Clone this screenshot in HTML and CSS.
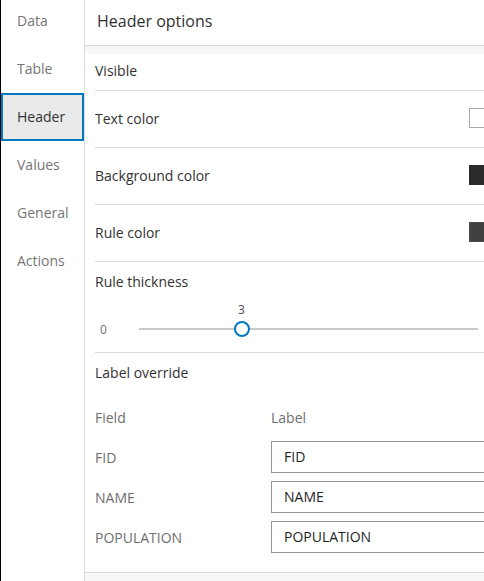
FILE: index.html
```html
<!DOCTYPE html>
<html>
<head>
<meta charset="utf-8">
<link rel="stylesheet" href="styles.css">
</head>
<body>
<div class="app">
  <nav class="side">
    <div class="tab">Data</div>
    <div class="tab">Table</div>
    <div class="tab active">Header</div>
    <div class="tab">Values</div>
    <div class="tab">General</div>
    <div class="tab">Actions</div>
  </nav>
  <main class="panel">
    <div class="title">Header options</div>
    <div class="band"></div>
    <div class="rows">
      <div class="row short"><span>Visible</span></div>
      <div class="row"><span>Text color</span><span class="swatch white"></span></div>
      <div class="row"><span>Background color</span><span class="swatch bg"></span></div>
      <div class="row"><span>Rule color</span><span class="swatch rule"></span></div>
      <div class="row slider-row">
        <div class="lbl">Rule thickness</div>
        <div class="slider">
          <span class="min">0</span>
          <div class="track">
            <span class="val">3</span>
            <span class="thumb"></span>
          </div>
        </div>
      </div>
      <div class="override">
        <div class="lbl">Label override</div>
        <div class="grid">
          <div class="gh">Field</div><div class="gh">Label</div>
          <div class="fname">FID</div><div class="inp">FID</div>
          <div class="fname">NAME</div><div class="inp">NAME</div>
          <div class="fname">POPULATION</div><div class="inp">POPULATION</div>
        </div>
      </div>
    </div>
    <div class="foot"></div>
  </main>
</div>
</body>
</html>
```
FILE: styles.css
```css
html, body { margin: 0; padding: 0; background: #fff; }
body { font-family: "Open Sans", "Liberation Sans", sans-serif; color: #323232; font-size: 14px; }
.app { display: flex; width: 484px; height: 581px; overflow: hidden; border-left: 1px solid #000; box-sizing: border-box; }
.side { width: 83px; flex: none; border-right: 1px solid #dcdcdc; display: flex; flex-direction: column; margin-top: -3px; }
.tab { height: 48px; line-height: 48px; padding-left: 16px; color: #757575; font-size: 14px; box-sizing: border-box; }
.tab.active { background: #eaeaea; border: 2px solid #0079c1; padding-left: 14px; color: #323232; line-height: 44px; }
.panel { flex: 1; min-width: 0; display: flex; flex-direction: column; }
.title { height: 45px; line-height: 42px; padding-left: 12px; font-size: 16px; border-bottom: 1px solid #dcdcdc; flex: none; }
.band { height: 8px; background: #f7f7f7; flex: none; }
.rows { padding-left: 10px; flex: 1; display: flex; flex-direction: column; }
.row { height: 57px; border-bottom: 1px solid #dcdcdc; display: flex; align-items: center; justify-content: space-between; box-sizing: border-box; padding-bottom: 2px; }
.row.short { height: 37px; padding-bottom: 4px; }
.swatch { width: 20px; height: 20px; box-sizing: border-box; flex: none; margin-right: -5px; }
.swatch.white { background: #fff; border: 1px solid #a8a8a8; }
.swatch.bg { background: #2b2b2b; border: 1px solid #2b2b2b; }
.swatch.rule { background: #404040; border: 1px solid #4a4a4a; }
.slider-row { height: 91px; flex-direction: column; align-items: stretch; justify-content: flex-start; padding-top: 12px; padding-bottom: 0; }
.lbl { font-size: 14px; line-height: 16px; }
.slider { display: flex; align-items: center; margin-top: 28px; }
.min { width: 44px; padding-left: 5px; box-sizing: border-box; font-size: 12px; line-height: 18px; padding-top: 3px; color: #6e6e6e; flex: none; }
.track { position: relative; flex: 1; height: 2px; background: #c8c8c8; margin-right: 6px; }
.thumb { position: absolute; left: 95px; top: -7px; width: 16px; height: 16px; box-sizing: border-box; border: 2px solid #0079c1; border-radius: 50%; background: #fff; }
.val { position: absolute; left: 99px; top: -26px; font-size: 12px; line-height: 16px; color: #4a4a4a; }
.override { padding-top: 12px; }
.grid { display: grid; grid-template-columns: 176px 1fr; grid-auto-rows: 32px; row-gap: 8px; margin-top: 20px; align-items: center; }
.gh { color: #6e6e6e; font-size: 14px; }
.fname { color: #6e6e6e; font-size: 14px; }
.inp { height: 32px; border: 1px solid #959595; box-sizing: border-box; line-height: 30px; padding-left: 12px; margin-right: -20px; font-size: 14px; color: #1f1f1f; }
.foot { height: 8px; border-top: 1px solid #dcdcdc; background: #f7f7f7; flex: none; }
```
